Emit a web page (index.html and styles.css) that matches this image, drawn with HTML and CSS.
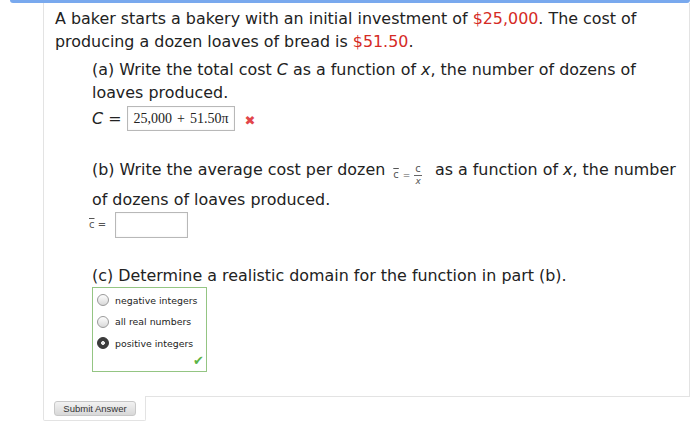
FILE: index.html
```html
<!DOCTYPE html>
<html>
<head>
<meta charset="utf-8">
<link rel="stylesheet" href="styles.css">
</head>
<body>
<div class="topbar"></div>
<div class="card">
  <p class="intro">A baker starts a bakery with an initial investment of <span class="red">$25,000</span>. The cost of producing a dozen loaves of bread is <span class="red">$51.50</span>.</p>
  <div class="part">
    <p class="qa">(a) Write the total cost <i>C</i> as a function of <i>x</i>, the number of dozens of loaves produced.</p>
    <div class="ansrow">
      <span class="lbl"><i>C</i> =</span>
      <span class="mathbox filled">25,000 + 51.50π</span>
      <span class="wrong">✖</span>
    </div>
    <p class="qb">(b) Write the average cost per dozen <span class="frac-expr"><span class="cbar">c</span><span class="eq">=</span><span class="frac"><span class="num">c</span><span class="den">x</span></span></span> as a function of <i>x</i>, the number of dozens of loaves produced.</p>
    <div class="ansrow small">
      <span class="lbl-small"><span class="cbar">c</span> =</span>
      <span class="mathbox empty"></span>
    </div>
    <p class="qc">(c) Determine a realistic domain for the function in part (b).</p>
    <div class="radios">
      <label class="opt"><span class="radio"></span>negative integers</label>
      <label class="opt"><span class="radio"></span>all real numbers</label>
      <label class="opt"><span class="radio on"></span>positive integers</label>
      <div class="checkrow"><span class="check">✔</span></div>
    </div>
  </div>
</div>
<div class="footer">
  <div class="tab"><button class="submit">Submit Answer</button></div>
  <div class="rest"></div>
</div>
</body>
</html>
```

FILE: styles.css
```css
html, body {
  margin: 0;
  padding: 0;
  background: #fff;
}
body {
  font-family: "DejaVu Sans", Verdana, sans-serif;
  color: #222;
}
.topbar {
  margin: 0 10px;
  height: 3px;
  background: #79a9ee;
  border-radius: 0 0 4px 4px;
}
.card {
  margin-left: 43px;
  width: 622px;
  border-left: 1px solid #e3e3e3;
  border-right: 1px solid #e3e3e3;
  padding: 4px 12px 0 11px;
  height: 389px;
  box-sizing: content-box;
  font-size: 15.9px;
  line-height: 23px;
}
p { margin: 0; }
.red { color: #d52b25; }
.part {
  padding-left: 37px;
}
.qa { margin-top: 5px; }
.ansrow {
  display: flex;
  align-items: center;
  height: 28px;
}
.lbl { margin-right: 6px; }
.mathbox {
  box-sizing: border-box;
  border: 1px solid #b8b8b8;
  box-shadow: inset 0 0 2px rgba(0,0,0,0.08);
  height: 25px;
  background: #fff;
}
.filled {
  font-family: "Liberation Serif", "DejaVu Serif", serif;
  font-size: 14px;
  line-height: 23px;
  word-spacing: 1.5px;
  padding: 0 4px 0 5px;
  width: 108px;
  white-space: nowrap;
  overflow: hidden;
}
.wrong {
  color: #e2464b;
  font-size: 13px;
  margin-left: 9px;
  margin-top: 5px;
}
.qb { margin-top: 26px; }
.frac-expr {
  display: inline-flex;
  align-items: center;
  font-size: 10px;
  line-height: 10px;
  color: #555;
  margin: 0 8px 0 3px;
  vertical-align: -3px;
  padding-bottom: 1px;
}
.eq { margin: 0 4px; font-size: 9px; }
.cbar {
  text-decoration: overline;
}
.frac {
  display: inline-flex;
  flex-direction: column;
  align-items: center;
}
.frac .num {
  border-bottom: 1px solid #666;
  padding: 0 1px 1px;
  line-height: 10px;
}
.frac .den { font-style: italic; line-height: 11px; font-size: 9px; }
.ansrow.small { height: 28px; }
.lbl-small {
  font-size: 10px;
  color: #555;
  margin-left: -3px;
  margin-right: 9px;
}
.empty { width: 73px; height: 26px; }
.qc { margin-top: 25px; }
.radios {
  width: 115px;
  height: 85px;
  box-sizing: border-box;
  border: 1px solid #94c583;
  padding-top: 2px;
  font-size: 9.4px;
  line-height: 21.5px;
}
.opt {
  display: flex;
  align-items: center;
  color: #222;
}
.radio {
  box-sizing: border-box;
  width: 12px;
  height: 12px;
  border-radius: 50%;
  border: 1px solid #9a9a9a;
  background: linear-gradient(#fdfdfd, #d9d9d9);
  margin: 0 6px 0 4px;
}
.radio.on {
  border-color: #333;
  background: radial-gradient(circle, #e8e8e8 0 1.6px, #3c3c3c 2.2px);
}
.checkrow {
  display: flex;
  justify-content: flex-end;
  line-height: 14px;
  padding-right: 2px;
}
.check {
  color: #5bb446;
  font-size: 13px;
}
.footer {
  display: flex;
  margin-left: 43px;
  width: 647px;
}
.tab {
  width: 103px;
  height: 25px;
  box-sizing: border-box;
  border: 1px solid #e3e3e3;
  border-top: none;
  border-radius: 0 0 2px 2px;
  padding: 5px 0 0 10px;
}
.rest {
  flex: 1;
  border-top: 1px solid #e3e3e3;
}
.submit {
  display: block;
  width: 82px;
  height: 15px;
  padding: 0;
  font-family: "Liberation Sans", Arial, sans-serif;
  font-size: 9.5px;
  color: #333;
  border: 1px solid #c8c8c8;
  border-radius: 3px;
  background: linear-gradient(#f2f2f2, #d8d8d8);
  line-height: 13px;
}
```
